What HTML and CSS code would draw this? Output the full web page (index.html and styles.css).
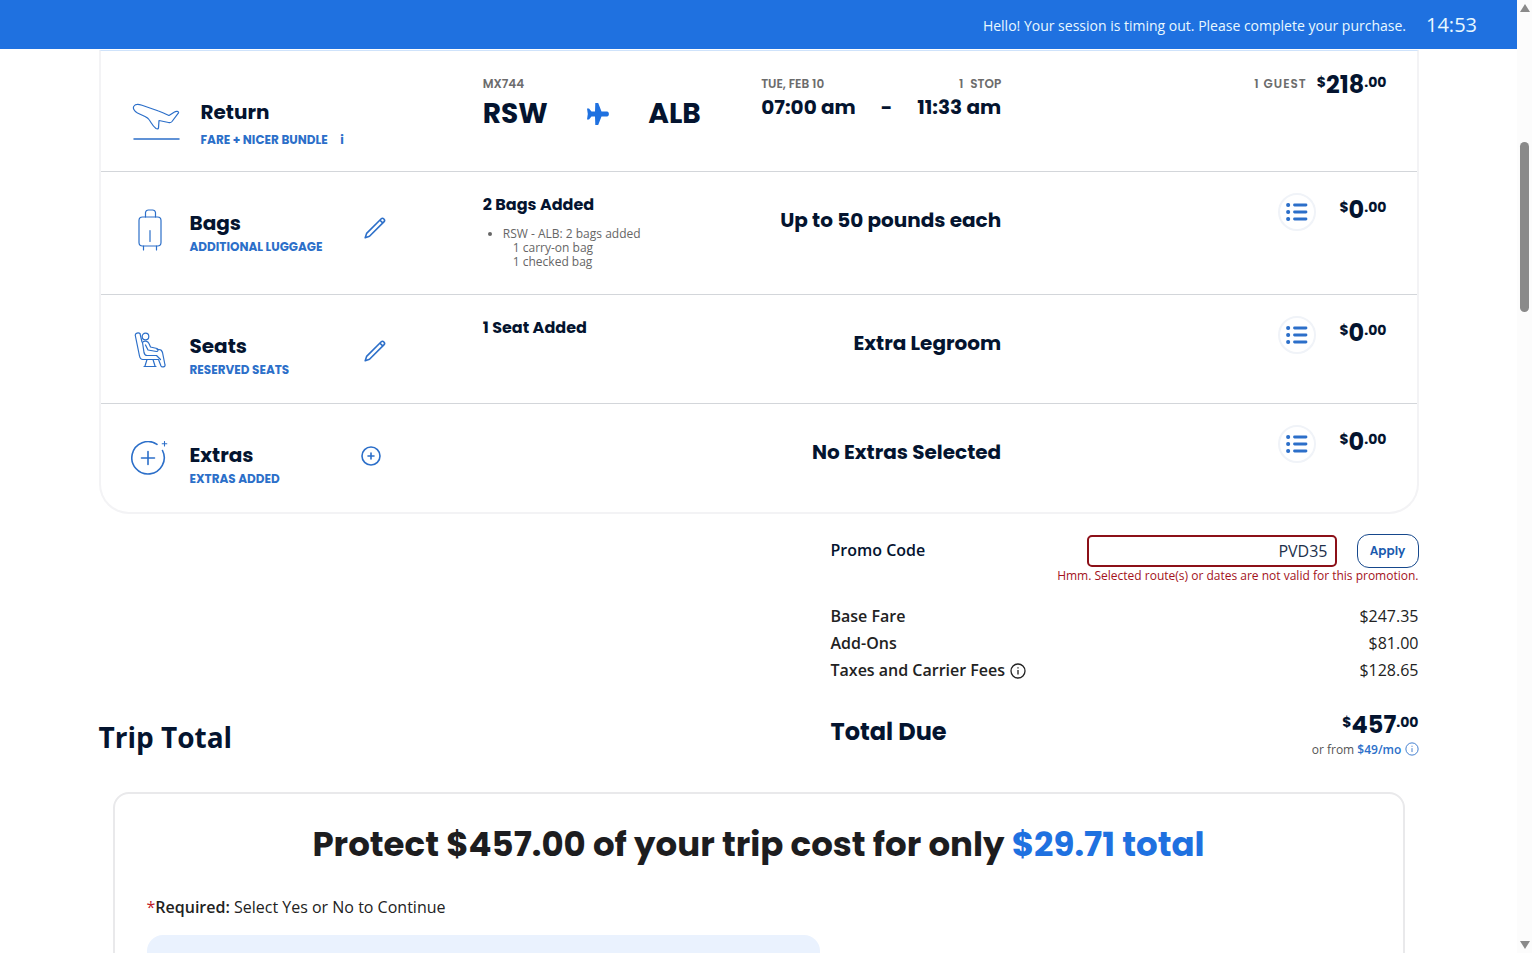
FILE: index.html
```html
<!DOCTYPE html>
<html lang="en">
<head>
<meta charset="utf-8">
<meta name="viewport" content="width=device-width, initial-scale=1">
<title>Trip summary</title>
<link rel="stylesheet" href="styles.css">
</head>
<body>
<svg class="defs" aria-hidden="true">
  <symbol id="pencil" viewBox="0 0 24 24"><path d="M2.200 21.800l1.400-4.400L18 3a2 2 0 0 1 2.900 2.900L6.500 20.300zM17 4.200l2.700 2.700"/></symbol>
  <symbol id="list" viewBox="0 0 22 18"><path d="M8.500 2h11.500M8.500 9h11.500M8.500 16h11.500" stroke-width="2.800"/><path d="M2 2h.300M2 9h.300M2 16h.300" stroke-width="3.800"/></symbol>
  <symbol id="info" viewBox="0 0 16 16"><circle cx="8" cy="8" r="7"/><path d="M8 7v4.500M8 4.300v1.200"/></symbol>
</svg>
<div class="page">
  <header class="timer">
    <p class="timer-text">Hello! Your session is timing out. Please complete your purchase.</p>
    <time class="timer-clock">14:53</time>
  </header>
  <main class="container">
    <section class="trip">
      <article class="row row-flight">
        <div class="item">
          <svg class="icon-plane line" viewBox="0 0 48 40"><path d="M2 3C3.500.800 7 1.200 10 2.200L26.500 8c4 1.300 7 2.800 10.500 4.500l5.500-3.500c1.500-.900 4.500-.800 4 .800L40 18.500c-.800 1-2 1.500-3.500 1l-9.500-2-.500 7.500c-.300 1.200-1.500 1-2.500.500-3.500-2.500-4.500-5.500-7-9-1-1.500-2-2-4-3L5.500 10C2 8 .500 5 2 3z"/><path d="M2 36h45" stroke-width="1.500"/></svg>
          <div class="label">
            <h2 class="title">Return</h2>
            <p class="sub">FARE + NICER BUNDLE <button class="info-letter" aria-label="Bundle details">i</button></p>
          </div>
        </div>
        <div class="flight">
          <div class="route">
            <p class="meta">MX744</p>
            <p class="airports"><span>RSW</span>
              <svg class="icon-jet" viewBox="0 0 22 22"><path d="M0 5.500h2L4.500 8.500h3.500L8.300 0h2.900l3.300 8.500H20c2.500 0 2.500 5 0 5h-5.500L11.200 22H8.300L8 13.500H4.500L2 16.500H0l.800-5.500z"/></svg>
              <span>ALB</span></p>
          </div>
          <div class="times">
            <p class="meta spread"><span>TUE, FEB 10</span><span class="stops"><span>1</span><span>STOP</span></span></p>
            <p class="hours"><span>07:00 am</span><span>-</span><span>11:33 am</span></p>
          </div>
        </div>
        <div class="cost cost-flight">
          <span class="guests">1 GUEST</span>
          <p class="price"><span class="small">$</span><span>218</span><span class="small">.00</span></p>
        </div>
      </article>

      <article class="row row-bags">
        <div class="item">
          <svg class="icon-item line" viewBox="0 0 38 42"><rect x="8" y="8" width="22" height="29" rx="3.500"/><path d="M14.500 8V3.500A3 3 0 0 1 17.500 1h4a3 3 0 0 1 3 2.500V8M19 21.500v11M12.500 37v4M25.500 37v4"/></svg>
          <div class="label">
            <h2 class="title">Bags</h2>
            <p class="sub">ADDITIONAL LUGGAGE</p>
          </div>
          <button class="edit" aria-label="Edit bags"><svg class="line bold"><use href="#pencil"/></svg></button>
        </div>
        <div class="details">
          <div class="added">
            <h3 class="added-title">2 Bags Added</h3>
            <ul class="bags"><li><span>RSW - ALB: 2 bags added</span><p>1 carry-on bag</p><p>1 checked bag</p></li></ul>
          </div>
          <p class="note">Up to 50 pounds each</p>
        </div>
        <div class="cost">
          <button class="more" aria-label="Bag details"><svg class="line"><use href="#list"/></svg></button>
          <p class="price"><span class="small">$</span><span>0</span><span class="small">.00</span></p>
        </div>
      </article>

      <article class="row">
        <div class="item">
          <svg class="icon-item line" viewBox="0 0 38 42"><circle cx="14.500" cy="4.500" r="3.300"/><path d="M9 1.500C7.500.300 4 1 4.300 3.500L8.500 24c.500 2.500 1.500 3.500 3.500 3.500h15.500l2.500 6.500c.700 1.500 4.500 1 4-1L31.500 20.500c-.500-2-1.500-3-3.500-3h-2M9 1.500L11 10"/><path d="M11.500 10.500c1.500-2.500 5.500-1.500 6.500 1l1.500 3.500 6.500 1.500c2 1 1 3-.500 3L17 18l-2.500-5M11.500 10.500L13 20.500c.500 2 1.500 3 3 3h9.500l4 4M16 27.500l-2 6.500M22 27.500l2 6.500M13 34.500h12"/></svg>
          <div class="label">
            <h2 class="title">Seats</h2>
            <p class="sub">RESERVED SEATS</p>
          </div>
          <button class="edit" aria-label="Edit seats"><svg class="line bold"><use href="#pencil"/></svg></button>
        </div>
        <div class="details">
          <h3 class="added-title">1 Seat Added</h3>
          <p class="note">Extra Legroom</p>
        </div>
        <div class="cost">
          <button class="more" aria-label="Seat details"><svg class="line"><use href="#list"/></svg></button>
          <p class="price"><span class="small">$</span><span>0</span><span class="small">.00</span></p>
        </div>
      </article>

      <article class="row">
        <div class="item">
          <svg class="icon-item line bold" viewBox="0 0 38 42"><path d="M26 3.300A16.200 16.200 0 1 0 31.500 9.500M17 10.500v13M10.500 17h13"/><path d="M33.500.500v4.500M31.200 2.800h4.600" stroke-width="1.100"/></svg>
          <div class="label">
            <h2 class="title">Extras</h2>
            <p class="sub">EXTRAS ADDED</p>
          </div>
          <button class="edit add" aria-label="Add extras"><svg class="line bold" viewBox="0 0 20 20"><circle cx="10" cy="10" r="9"/><path d="M10 7v6M7 10h6"/></svg></button>
        </div>
        <div class="details">
          <p class="note">No Extras Selected</p>
        </div>
        <div class="cost">
          <button class="more" aria-label="Extras details"><svg class="line"><use href="#list"/></svg></button>
          <p class="price"><span class="small">$</span><span>0</span><span class="small">.00</span></p>
        </div>
      </article>
    </section>

    <section class="summary">
      <h2 class="trip-total">Trip Total</h2>
      <div class="totals">
        <form class="promo">
          <label for="promo">Promo Code</label>
          <input id="promo" type="text" value="PVD35" aria-describedby="promo-error">
          <button class="apply" type="button">Apply</button>
        </form>
        <p class="error" id="promo-error">Hmm. Selected route(s) or dates are not valid for this promotion.</p>
        <dl class="fees">
          <dt>Base Fare</dt><dd>$247.35</dd>
          <dt>Add-Ons</dt><dd>$81.00</dd>
          <dt>Taxes and Carrier Fees <svg class="icon-info"><use href="#info"/></svg></dt><dd>$128.65</dd>
        </dl>
        <div class="due">
          <h2 class="due-title">Total Due</h2>
          <div>
            <p class="price"><span class="small">$</span><span>457</span><span class="small">.00</span></p>
            <p class="monthly">or from <a href="#monthly">$49/mo <svg class="icon-info"><use href="#info"/></svg></a></p>
          </div>
        </div>
      </div>
    </section>

    <section class="protect">
      <h2 class="protect-title">Protect $457.00 of your trip cost for only <span>$29.71 total</span></h2>
      <p class="required"><span class="star">*</span><b>Required:</b> Select Yes or No to Continue</p>
      <div class="option"></div>
    </section>
  </main>
</div>
<div class="scrollbar" aria-hidden="true">
  <svg class="arrow" viewBox="0 0 10 8"><path d="M5 0l5 8H0z"/></svg>
  <div class="track"><div class="thumb"></div></div>
  <svg class="arrow" viewBox="0 0 10 8"><path d="M0 0h10L5 8z"/></svg>
</div>
</body>
</html>
```

FILE: styles.css
```css
* { box-sizing: border-box; }

body {
  margin: 0;
  height: 100vh;
  display: flex;
  overflow: hidden;
  background: #fff;
  color: #222;
  font: 16px/24px "Open Sans", sans-serif;
}

h2, h3, p, ul, dl, dd { margin: 0; padding: 0; }

button {
  padding: 0;
  border: 0;
  background: none;
  color: inherit;
  font: inherit;
  cursor: pointer;
}

.defs { position: absolute; width: 0; height: 0; }

.line {
  fill: none;
  stroke: #2c6fc9;
  stroke-width: 1.2;
  stroke-linecap: round;
  stroke-linejoin: round;
}
.bold { stroke-width: 1.6; }

.page { flex: 1; min-width: 0; height: 100%; overflow: hidden; }

.timer {
  height: 49px;
  margin-bottom: 1px;
  padding-right: 40px;
  display: flex;
  align-items: center;
  justify-content: flex-end;
  gap: 20px;
  background: #1f71e0;
  color: #e9f8ff;
}
.timer-text { font-size: 14px; padding-top: 3px; }
.timer-clock { font-size: 20px; }

.container { max-width: 1320px; margin: 0 auto; }

.trip {
  border: 2px solid #f3f3f5;
  border-top: 1px solid #cfe3fb;
  border-radius: 0 0 30px 30px;
  color: #04142f;
  font-family: Poppins, Inter, sans-serif;
  font-weight: 700;
}

.row {
  display: grid;
  grid-template-columns: minmax(0, 352fr) minmax(0, 518fr) minmax(0, 385fr);
  min-height: 109px;
  padding: 0 30px;
}
.row + .row { border-top: 1px solid #d3d6da; }
.row-flight { min-height: 120px; }
.row-bags { min-height: 123px; }

.item { display: flex; align-items: flex-start; padding-top: 37px; }
.row-flight .item { padding-top: 48px; }
.icon-item { width: 38px; height: 42px; margin-right: 21px; }
.icon-plane { width: 48px; height: 40px; margin: 4px 21px 0 1px; }
.label { flex: 1; }
.title { font-size: 20px; line-height: 28px; }
.sub { color: #2c6fc9; font-size: 12px; line-height: 20px; }
.row-flight .title { line-height: 26px; }
.row-flight .sub { line-height: 30px; }
.info-letter { margin-left: 10px; }
.edit { width: 24px; height: 24px; margin: 7px 96px 0 0; }
.edit svg { display: block; width: 24px; height: 24px; }
.add { width: 20px; height: 20px; margin: 9px 102px 0 0; }
.row .add { margin-top: 5px; }
.add svg { width: 20px; height: 20px; }

.flight { display: flex; justify-content: space-between; padding-top: 24px; }
.route { width: 218px; }
.times { width: 240px; }
.meta { color: #6c6c6c; font-size: 12px; line-height: 18px; font-weight: 600; }
.spread, .airports, .hours { display: flex; justify-content: space-between; align-items: center; }
.stops { display: flex; gap: 7px; }
.airports { font-size: 28px; line-height: 42px; }
.icon-jet { width: 22px; height: 22px; fill: #1f71e0; }
.hours { font-size: 20px; line-height: 28px; }

.details { display: flex; justify-content: space-between; }
.added-title { padding-top: 21px; font-size: 16px; line-height: 24px; }
.bags {
  margin-top: 10px;
  padding-left: 20px;
  color: #666;
  font: 12px/14px "Open Sans", sans-serif;
}
.bags p { padding-left: 10px; }
.note { margin-left: auto; padding-top: 34px; font-size: 20px; line-height: 28px; }

.cost { display: flex; justify-content: flex-end; align-items: flex-start; gap: 23px; padding-top: 21px; }
.cost-flight { gap: 10px; padding-top: 22px; }
.cost .price { padding-top: 5px; }
.cost-flight .price { padding-top: 0; }
.guests { color: #6c6c6c; font-size: 12px; line-height: 22px; letter-spacing: 1px; font-weight: 600; }
.more {
  width: 38px;
  height: 38px;
  border: 2px solid #f0f3f8;
  border-radius: 50%;
}
.more svg { display: block; width: 22px; height: 18px; margin: 0 auto; }

.price {
  display: flex;
  justify-content: flex-end;
  color: #04142f;
  font: 700 24px/24px Poppins, Inter, sans-serif;
}
.price .small { font-size: 14px; line-height: 18px; }

.summary { display: grid; grid-template-columns: minmax(0, 732fr) minmax(0, 588fr); padding-top: 20px; }
.trip-total {
  align-self: end;
  padding-bottom: 4px;
  color: #04142f;
  font-size: 28px;
  line-height: 38px;
}

.promo { display: flex; align-items: center; }
.promo label { flex: 1; padding-bottom: 2px; color: #04142f; font-weight: 600; }
.promo input {
  width: 250px;
  height: 32px;
  margin-right: 20px;
  padding: 0 7px;
  border: 2px solid #8c1018;
  border-radius: 5px;
  background: #fff;
  color: #22304a;
  font: inherit;
  text-align: right;
}
.apply {
  width: 62px;
  height: 34px;
  border: 1px solid #16488c;
  border-radius: 12px;
  color: #1a5aae;
  font: 600 12px/20px Poppins, Inter, sans-serif;
}
.error { color: #a3121b; font-size: 12px; line-height: 16px; text-align: right; }

.fees {
  display: grid;
  grid-template-columns: 1fr auto;
  padding-top: 19px;
  line-height: 27px;
}
.fees dt { display: flex; align-items: center; gap: 5px; font-weight: 600; }
.fees dd { text-align: right; }
.icon-info { width: 16px; height: 16px; fill: none; stroke: currentColor; stroke-width: 1.3; }

.due { display: flex; justify-content: space-between; padding-top: 29px; }
.due-title {
  padding-top: 3px;
  color: #04142f;
  font: 700 24px/32px Poppins, Inter, sans-serif;
}
.monthly { padding-top: 3px; color: #555; font-size: 12px; line-height: 20px; }
.monthly a { color: #2c6fc9; font-weight: 600; text-decoration: none; }
.monthly .icon-info { width: 14px; height: 14px; vertical-align: -2px; stroke-width: 1; }

.protect {
  margin: 32px 14px 0;
  padding: 28px 32px 0;
  border: 2px solid #e9e9eb;
  border-radius: 16px;
}
.protect-title {
  color: #1d1d1f;
  font: 700 34px/44px Poppins, Inter, sans-serif;
  text-align: center;
}
.protect-title span { color: #1f71e0; }
.required { padding-top: 29px; }
.required b { font-weight: 600; }
.star { color: #c0202a; }
.option {
  width: 55%;
  height: 200px;
  margin-top: 16px;
  border-radius: 16px;
  background: #eaf2fe;
}

.scrollbar {
  width: 15px;
  padding: 4px 2px;
  display: flex;
  flex-direction: column;
  align-items: center;
  background: #fcfcfc;
}
.arrow { width: 10px; height: 8px; fill: #8a8a8a; }
.track { flex: 1; padding-top: 130px; }
.thumb { width: 9px; height: 170px; border-radius: 5px; background: #8a8a8a; }
```
